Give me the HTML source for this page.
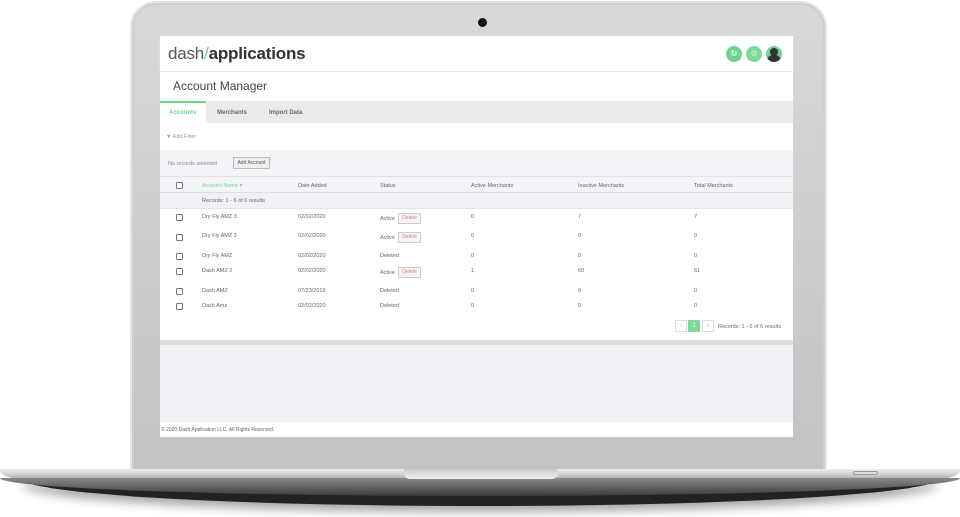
<!DOCTYPE html><html><head><style>
*{margin:0;padding:0;box-sizing:border-box}
body{width:960px;height:517px;background:#fff;position:relative;overflow:hidden;font-family:"Liberation Sans",sans-serif;color:#555}
.a{position:absolute}
.t{position:absolute;font-size:5.5px;color:#666;white-space:nowrap}
.cb{position:absolute;width:7px;height:7px;border:1px solid #777;border-radius:1.5px;background:#fff}
.del{position:absolute;width:23px;height:11px;border:1px solid #ccc;background:#f4f4f4;color:#e77;font-size:5px;text-align:center;line-height:9px;border-radius:1px}
</style></head><body>
<div class="a" style="left:130px;top:1px;width:697px;height:472px;border-radius:26px 26px 0 0;background:#cfcfcf;border:2px solid #e6e6e6"></div>
<div class="a" style="left:134px;top:5px;width:689px;height:468px;border-radius:23px 23px 0 0;background:linear-gradient(#d8d8d8,#c3c3c3)"></div>
<div class="a" style="left:478px;top:18px;width:9px;height:9px;border-radius:50%;background:#111"></div>
<div class="a" style="left:160px;top:36px;width:633px;height:402px;background:#f0f1f5"></div>
<div class="a" style="left:160px;top:36px;width:633px;height:35px;background:#fff;box-shadow:0 1px 2px #e4e4e4"></div>
<div class="a" style="left:168px;top:44px;font-size:17px;color:#555;letter-spacing:-0.2px">dash<span style="color:#6cd38e">/</span><b style="color:#333">applications</b></div>
<div class="a" style="left:726px;top:46px;width:16px;height:16px;border-radius:50%;background:#6cd38e;color:#fff;font-size:8px;font-weight:bold;text-align:center;line-height:16px">↻</div>
<div class="a" style="left:746px;top:46px;width:16px;height:16px;border-radius:50%;background:#7dd89a;color:#c8f0d4;font-size:8px;text-align:center;line-height:16px">⚙</div>
<div class="a" style="left:766px;top:46px;width:16px;height:16px;border-radius:50%;background:#6cd38e;overflow:hidden"><div class="a" style="left:4px;top:2px;width:8px;height:8px;border-radius:50%;background:#333"></div><div class="a" style="left:1px;top:9px;width:14px;height:10px;border-radius:6px 6px 0 0;background:#333"></div></div>
<div class="a" style="left:160px;top:72px;width:633px;height:29px;background:#fff"></div>
<div class="a" style="left:173px;top:79px;font-size:12px;color:#444">Account Manager</div>
<div class="a" style="left:160px;top:101px;width:633px;height:22px;background:#ebebeb"></div>
<div class="a" style="left:160px;top:101px;width:46px;height:22px;background:#fff;border-top:2px solid #6cd38e"></div>
<div class="t" style="left:169px;top:110px;color:#6cd38e;font-weight:bold;font-size:6px">Accounts</div>
<div class="t" style="left:217px;top:110px;font-weight:bold;font-size:6px">Merchants</div>
<div class="t" style="left:269px;top:110px;font-weight:bold;font-size:6px">Import Data</div>
<div class="a" style="left:160px;top:123px;width:633px;height:27px;background:#fff"></div>
<div class="t" style="left:166px;top:134px;color:#999">▼ Add Filter</div>
<div class="a" style="left:160px;top:150px;width:633px;height:27px;background:#f3f4f7;border-bottom:1px solid #e2e2e2"></div>
<div class="t" style="left:168px;top:161px;color:#888">No records selected</div>
<div class="a" style="left:233px;top:157px;width:37px;height:12px;border:1px solid #bbb;background:#eee;font-size:5px;text-align:center;line-height:10px;color:#555">Add Account</div>
<div class="a" style="left:160px;top:177px;width:633px;height:16px;background:#f3f4f7;border-bottom:1px solid #ddd"></div>
<div class="a" style="left:160px;top:193px;width:633px;height:16px;background:#f0f1f5;border-bottom:1px solid #e4e4e4"></div>
<div class="cb" style="left:176px;top:182px"></div>
<div class="t" style="left:202px;top:183px;color:#6cd38e">Account Name ▾</div>
<div class="t" style="left:298px;top:183px">Date Added</div>
<div class="t" style="left:380px;top:183px">Status</div>
<div class="t" style="left:471px;top:183px">Active Merchants</div>
<div class="t" style="left:578px;top:183px">Inactive Merchants</div>
<div class="t" style="left:694px;top:183px">Total Merchants</div>
<div class="t" style="left:202px;top:198px">Records: 1 - 6 of 6 results</div>
<div class="a" style="left:160px;top:209px;width:633px;height:131px;background:#fff"></div>
<div class="cb" style="left:176px;top:214px"></div><div class="t" style="left:202px;top:214px">Dry Fly AMZ 3</div><div class="t" style="left:298px;top:214px">02/02/2020</div><div class="t" style="left:380px;top:216px">Active</div><div class="del" style="left:398px;top:213px">Delete</div><div class="t" style="left:471px;top:214px">0</div><div class="t" style="left:578px;top:214px">7</div><div class="t" style="left:694px;top:214px">7</div>
<div class="cb" style="left:176px;top:234px"></div><div class="t" style="left:202px;top:233px">Dry Fly AMZ 2</div><div class="t" style="left:298px;top:233px">02/02/2020</div><div class="t" style="left:380px;top:235px">Active</div><div class="del" style="left:398px;top:232px">Delete</div><div class="t" style="left:471px;top:233px">0</div><div class="t" style="left:578px;top:233px">0</div><div class="t" style="left:694px;top:233px">0</div>
<div class="cb" style="left:176px;top:253px"></div><div class="t" style="left:202px;top:253px">Dry Fly AMZ</div><div class="t" style="left:298px;top:253px">02/02/2020</div><div class="t" style="left:380px;top:253px">Deleted</div><div class="t" style="left:471px;top:253px">0</div><div class="t" style="left:578px;top:253px">0</div><div class="t" style="left:694px;top:253px">0</div>
<div class="cb" style="left:176px;top:268px"></div><div class="t" style="left:202px;top:268px">Dash AMZ 2</div><div class="t" style="left:298px;top:268px">02/02/2020</div><div class="t" style="left:380px;top:270px">Active</div><div class="del" style="left:398px;top:267px">Delete</div><div class="t" style="left:471px;top:268px">1</div><div class="t" style="left:578px;top:268px">60</div><div class="t" style="left:694px;top:268px">61</div>
<div class="cb" style="left:176px;top:288px"></div><div class="t" style="left:202px;top:288px">Dash AMZ</div><div class="t" style="left:298px;top:288px">07/23/2019</div><div class="t" style="left:380px;top:288px">Deleted</div><div class="t" style="left:471px;top:288px">0</div><div class="t" style="left:578px;top:288px">0</div><div class="t" style="left:694px;top:288px">0</div>
<div class="cb" style="left:176px;top:303px"></div><div class="t" style="left:202px;top:303px">Dash Amz</div><div class="t" style="left:298px;top:303px">02/02/2020</div><div class="t" style="left:380px;top:303px">Deleted</div><div class="t" style="left:471px;top:303px">0</div><div class="t" style="left:578px;top:303px">0</div><div class="t" style="left:694px;top:303px">0</div>
<div class="a" style="left:675px;top:320px;width:12px;height:12px;border:1px solid #ddd;font-size:6px;color:#bbb;text-align:center;line-height:10px">‹</div>
<div class="a" style="left:688px;top:320px;width:12px;height:12px;background:#7dd89a;font-size:6px;color:#fff;text-align:center;line-height:12px">1</div>
<div class="a" style="left:702px;top:320px;width:12px;height:12px;border:1px solid #ddd;font-size:6px;color:#bbb;text-align:center;line-height:10px">›</div>
<div class="t" style="left:718px;top:324px">Records: 1 - 6 of 6 results</div>
<div class="a" style="left:160px;top:340px;width:633px;height:5px;background:#dedede"></div>
<div class="a" style="left:160px;top:422px;width:633px;height:16px;background:#fff;border-bottom:1px solid #ccc"></div>
<div class="t" style="left:161px;top:427px;font-size:5px">© 2020 Dash Application LLC. All Rights Reserved.</div>
<div class="a" style="left:20px;top:478px;width:920px;height:28px;border-radius:0 0 50% 50%/0 0 100% 100%;background:#222;box-shadow:0 6px 10px rgba(0,0,0,.35)"></div>
<div class="a" style="left:0;top:469px;width:960px;height:11px;border-radius:2px 2px 40px 40px/2px 2px 12px 12px;background:linear-gradient(#eee,#c8c8c8 60%,#9a9a9a)"></div>
<div class="a" style="left:0;top:478px;width:960px;height:18px;border-radius:0 0 50% 50%/0 0 100% 100%;background:linear-gradient(#8a8a8a,#3a3a3a)"></div>
<div class="a" style="left:404px;top:469px;width:154px;height:10px;border-radius:0 0 6px 6px;background:linear-gradient(#ccc,#eee)"></div>
<div class="a" style="left:853px;top:471px;width:25px;height:4px;border-radius:2px;border:1px solid #999;background:#ddd"></div>
</body></html>
